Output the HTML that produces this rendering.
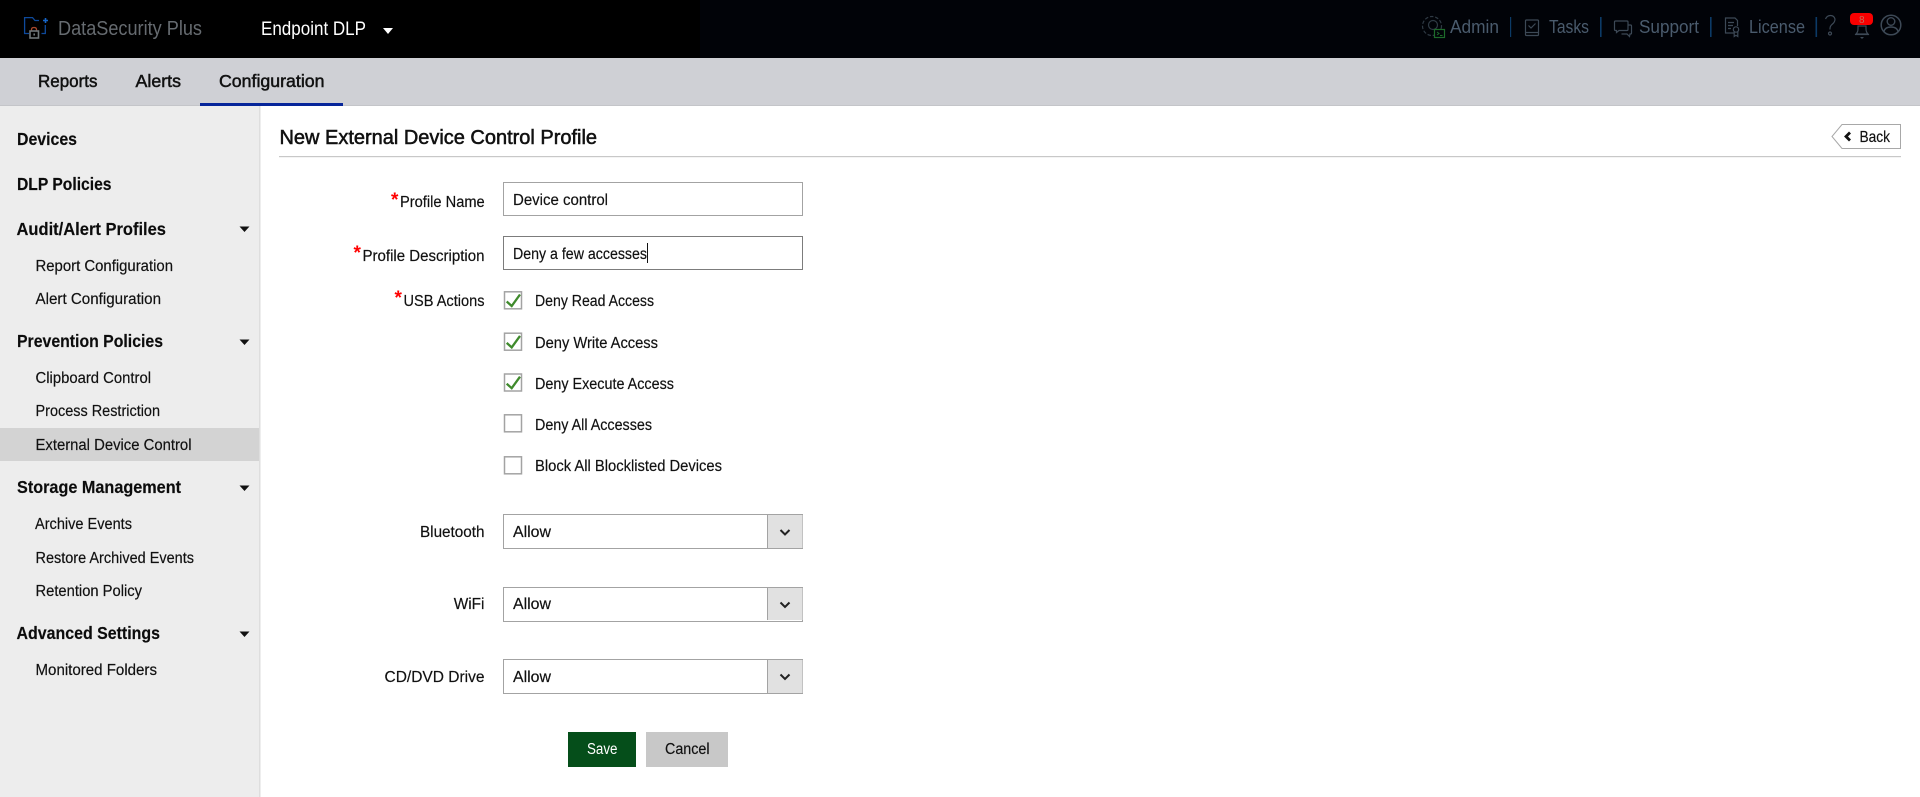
<!DOCTYPE html>
<html lang="en">
<head>
<meta charset="utf-8">
<title>New External Device Control Profile</title>
<style>
html,body{margin:0;padding:0;background:#fff;width:1920px;height:797px;overflow:hidden}
svg{display:block;position:absolute;left:0;top:0}
text{font-family:"Liberation Sans",Arial,sans-serif;fill:#111;font-size:15.5px;stroke:#111;stroke-width:.18}
.h{font-size:17.5px;font-weight:700;fill:#0c0c0c;stroke:#0c0c0c;stroke-width:.15}
.n{font-size:17.5px;stroke:#111;stroke-width:.5;fill:#111}
.t{font-size:18px;fill:#4a5b6d;stroke:none}
.ic{fill:none;stroke:#3d4956;stroke-width:1.2}
.s{font-size:19px;font-weight:700;fill:#f00;stroke:none}
</style>
</head>
<body>
<svg width="1920" height="797" viewBox="0 0 1920 797" xmlns="http://www.w3.org/2000/svg">
<!-- header -->
<rect x="0" y="0" width="1920" height="58" fill="#010308"/>
<rect x="0" y="0" width="700" height="58" fill="#000"/>
<rect x="0" y="58" width="1920" height="47" fill="#cfd0d5"/>
<rect x="0" y="105" width="1920" height="1" fill="#c4c5c9"/>
<rect x="200" y="103" width="143" height="3" fill="#06259a"/>

<!-- logo -->
<g fill="none" stroke="#0e4a9c" stroke-width="1.3">
<path d="M29 33.500H24.600V17.600H32.500L35 20.500H39"/>
<path d="M45.300 25V33.500H41.500"/>
</g>
<path d="M43 20.500H48M45.500 18V23" stroke="#1665c8" stroke-width="1.600" fill="none"/>
<path d="M31.500 31V29.500Q31.500 27.500 34 27.500Q36.500 27.500 36.500 29.500V31" fill="none" stroke="#a8482c" stroke-width="1.300"/>
<rect x="30" y="31" width="8.500" height="7" fill="none" stroke="#6e7679" stroke-width="1.600"/>
<rect x="33.400" y="33.500" width="1.600" height="2" fill="#6e7679"/>
<text x="58" y="35" textLength="144" lengthAdjust="spacingAndGlyphs" style="font-size:20px;fill:#666b70;stroke:none">DataSecurity Plus</text>
<text x="261" y="35" textLength="105" lengthAdjust="spacingAndGlyphs" style="font-size:19px;fill:#fff;stroke:none">Endpoint DLP</text>
<path d="M383 28H393L388 34Z" fill="#fff"/>

<!-- header right -->
<circle cx="1432" cy="26" r="9.500" fill="none" stroke="#2f3a44" stroke-width="1.200" stroke-dasharray="3.500 1.800"/>
<circle cx="1433" cy="25" r="4.500" fill="none" stroke="#2f3a44" stroke-width="1.200"/>
<rect x="1434.500" y="29.500" width="10" height="8" fill="#010308" stroke="#1d6b2a" stroke-width="1.200"/>
<path d="M1437 32l2 1.500-2 1.500M1440 35.500h2.500" fill="none" stroke="#1d6b2a" stroke-width="1"/>
<text class="t" x="1450" y="33" textLength="49" lengthAdjust="spacingAndGlyphs">Admin</text>
<rect x="1510" y="17" width="1.200" height="20" fill="#0c3a66"/>

<g class="ic">
<rect x="1525.500" y="20" width="13" height="15.500" rx="1"/>
<path d="M1525.500 32.500h13"/>
<path d="M1528.500 25.500l2.500 2.500 4.500-4.500"/>
</g>
<text class="t" x="1549" y="33" textLength="40" lengthAdjust="spacingAndGlyphs">Tasks</text>
<rect x="1600" y="17" width="1.600" height="20" fill="#0c3a66"/>

<g class="ic">
<path d="M1615.500 21h11.500a1 1 0 0 1 1 1v7.500a1 1 0 0 1-1 1h-8l-2.500 2v-2h-1a1 1 0 0 1-1-1V22a1 1 0 0 1 1-1z"/>
<path d="M1628 25h2.500a1 1 0 0 1 1 1v7a1 1 0 0 1-1 1h-.5l-.5 2.500-2.500-2.500h-5.500"/>
</g>
<text class="t" x="1639" y="33" textLength="60" lengthAdjust="spacingAndGlyphs">Support</text>
<rect x="1710" y="17" width="1.600" height="20" fill="#0c3a66"/>

<g class="ic">
<path d="M1734 33h-8.500V18h9.500l2.500 2.500V26"/>
<path d="M1728 22.500h6M1728 25.500h5M1728 28.500h3"/>
<circle cx="1736" cy="29.500" r="2.700"/>
<path d="M1734.200 32v4.500l1.800-1.200 1.800 1.200V32"/>
</g>
<text class="t" x="1749" y="33" textLength="56" lengthAdjust="spacingAndGlyphs">License</text>
<rect x="1815.500" y="17" width="1.600" height="20" fill="#0c3a66"/>

<path d="M1825.500 19q1.500-3.500 5-3.500t4.500 3.500q0 3-2.500 5t-2.500 4.500v1" class="ic"/>
<circle cx="1830" cy="33.500" r="1.500" class="ic"/>

<path d="M1856 34q2-2 2-5v-3h8v3q0 3 2 5z" class="ic"/>
<path d="M1855 34.500h14" class="ic"/>
<path d="M1860 37h4l-2 2z" fill="#3d4956"/>
<rect x="1850" y="13" width="23" height="12" rx="4" fill="#f90000"/>
<text x="1859" y="23" style="font-size:10px;fill:#c86a58;stroke:none">8</text>
<circle cx="1891" cy="25" r="9.800" class="ic" style="stroke-width:1.500"/>
<circle cx="1891" cy="21.500" r="3.800" class="ic" style="stroke-width:1.400"/>
<path d="M1884 31.500q1-4.500 7-4.500t7 4.500" class="ic" style="stroke-width:1.400"/>

<!-- top nav -->
<text class="n" x="38" y="87" textLength="59.500" lengthAdjust="spacingAndGlyphs">Reports</text>
<text class="n" x="135.500" y="87" textLength="45.500" lengthAdjust="spacingAndGlyphs">Alerts</text>
<text class="n" x="219" y="87" textLength="105.500" lengthAdjust="spacingAndGlyphs">Configuration</text>

<!-- sidebar -->
<rect x="0" y="106" width="259" height="691" fill="#ededed"/>
<rect x="259" y="106" width="1.500" height="691" fill="#dedede"/>
<rect x="0" y="428" width="259" height="33" fill="#d3d3d3"/>

<text class="h" x="17" y="145" textLength="60" lengthAdjust="spacingAndGlyphs">Devices</text>
<text class="h" x="17" y="190" textLength="94.500" lengthAdjust="spacingAndGlyphs">DLP Policies</text>
<text class="h" x="16.500" y="235" textLength="149.500" lengthAdjust="spacingAndGlyphs">Audit/Alert Profiles</text>
<text x="35.500" y="271" textLength="137.500" lengthAdjust="spacingAndGlyphs">Report Configuration</text>
<text x="35.500" y="304" textLength="125.500" lengthAdjust="spacingAndGlyphs">Alert Configuration</text>
<text class="h" x="17" y="347" textLength="146" lengthAdjust="spacingAndGlyphs">Prevention Policies</text>
<text x="35.500" y="383" textLength="115.500" lengthAdjust="spacingAndGlyphs">Clipboard Control</text>
<text x="35.500" y="416" textLength="124.500" lengthAdjust="spacingAndGlyphs">Process Restriction</text>
<text x="35.500" y="450" textLength="156" lengthAdjust="spacingAndGlyphs">External Device Control</text>
<text class="h" x="17" y="493" textLength="164" lengthAdjust="spacingAndGlyphs">Storage Management</text>
<text x="35" y="529" textLength="97" lengthAdjust="spacingAndGlyphs">Archive Events</text>
<text x="35.500" y="563" textLength="158.500" lengthAdjust="spacingAndGlyphs">Restore Archived Events</text>
<text x="35.500" y="596" textLength="106.500" lengthAdjust="spacingAndGlyphs">Retention Policy</text>
<text class="h" x="16.500" y="639" textLength="143.500" lengthAdjust="spacingAndGlyphs">Advanced Settings</text>
<text x="35.500" y="675" textLength="121.500" lengthAdjust="spacingAndGlyphs">Monitored Folders</text>

<g fill="#111">
<path d="M239.500 226.500H249.500L244.500 232Z"/>
<path d="M239.500 339.500H249.500L244.500 345Z"/>
<path d="M239.500 485.500H249.500L244.500 491Z"/>
<path d="M239.500 631.500H249.500L244.500 637Z"/>
</g>

<!-- title -->
<text x="279.500" y="144" textLength="317.500" lengthAdjust="spacingAndGlyphs" style="font-size:20px;stroke:#111;stroke-width:.55">New External Device Control Profile</text>
<rect x="279" y="156" width="1622" height="1.200" fill="#c8c8c8"/>

<!-- back -->
<path d="M1842 124.500H1900.500V148.500H1842L1832 136.500Z" fill="#fff" stroke="#a8a8a8" stroke-width="1"/>
<path d="M1850 132.500l-4 4 4 4" fill="none" stroke="#111" stroke-width="2.800"/>
<text x="1859.500" y="142" textLength="30.500" lengthAdjust="spacingAndGlyphs" style="font-size:16px">Back</text>

<!-- form labels -->
<text class="s" x="391" y="206">*</text>
<text class="s" x="353.500" y="259">*</text>
<text class="s" x="394.500" y="304">*</text>
<text x="400" y="207" textLength="84.700" lengthAdjust="spacingAndGlyphs">Profile Name</text>
<text x="362.500" y="261" textLength="122" lengthAdjust="spacingAndGlyphs">Profile Description</text>
<text x="403.500" y="306" textLength="81" lengthAdjust="spacingAndGlyphs">USB Actions</text>
<text x="420" y="537" textLength="64.500" lengthAdjust="spacingAndGlyphs">Bluetooth</text>
<text x="453.700" y="609" textLength="30.800" lengthAdjust="spacingAndGlyphs">WiFi</text>
<text x="384.500" y="682" textLength="100" lengthAdjust="spacingAndGlyphs">CD/DVD Drive</text>

<!-- inputs -->
<rect x="503.500" y="182.500" width="299" height="33" fill="#fff" stroke="#a3a3a3"/>
<text x="513" y="205" textLength="95" lengthAdjust="spacingAndGlyphs">Device control</text>
<rect x="503.500" y="236.500" width="299" height="33" fill="#fff" stroke="#7c7c7c"/>
<text x="513" y="259" textLength="134" lengthAdjust="spacingAndGlyphs">Deny a few accesses</text>
<rect x="647" y="243" width="1" height="20" fill="#111"/>

<!-- checkboxes -->
<g fill="#fff" stroke="#a3a3a3" stroke-width="1.500">
<rect x="504.500" y="291.800" width="17" height="17"/>
<rect x="504.500" y="333.200" width="17" height="17"/>
<rect x="504.500" y="374" width="17" height="17"/>
<rect x="504.500" y="414.800" width="17" height="17"/>
<rect x="504.500" y="456.800" width="17" height="17"/>
</g>
<g fill="none" stroke="#3f8a2c" stroke-width="2.300">
<path d="M506.700 301.500l5 4.500 8.300-11.500"/>
<path d="M506.700 342.900l5 4.500 8.300-11.500"/>
<path d="M506.700 383.700l5 4.500 8.300-11.500"/>
</g>
<text x="535" y="306" textLength="119" lengthAdjust="spacingAndGlyphs">Deny Read Access</text>
<text x="535" y="348" textLength="123" lengthAdjust="spacingAndGlyphs">Deny Write Access</text>
<text x="535" y="389" textLength="139" lengthAdjust="spacingAndGlyphs">Deny Execute Access</text>
<text x="535" y="430" textLength="117" lengthAdjust="spacingAndGlyphs">Deny All Accesses</text>
<text x="535" y="471" textLength="187" lengthAdjust="spacingAndGlyphs">Block All Blocklisted Devices</text>

<!-- selects -->
<g>
<rect x="503.500" y="514.500" width="299" height="34" fill="#fff" stroke="#a3a3a3"/>
<rect x="767.500" y="515" width="35" height="33" fill="#e1e1e1"/>
<path d="M767.500 515V548" stroke="#a3a3a3"/>
<path d="M780.500 530l4.500 4.500 4.500-4.500" fill="none" stroke="#222" stroke-width="2"/>
<text x="513" y="537" textLength="38" lengthAdjust="spacingAndGlyphs">Allow</text>
</g>
<g>
<rect x="503.500" y="587.500" width="299" height="34" fill="#fff" stroke="#a3a3a3"/>
<rect x="767.500" y="588" width="35" height="32" fill="#e1e1e1"/>
<path d="M767.500 588V620" stroke="#a3a3a3"/>
<path d="M780.500 602.500l4.500 4.500 4.500-4.500" fill="none" stroke="#222" stroke-width="2"/>
<text x="513" y="609" textLength="38" lengthAdjust="spacingAndGlyphs">Allow</text>
</g>
<g>
<rect x="503.500" y="659.500" width="299" height="34" fill="#fff" stroke="#a3a3a3"/>
<rect x="767.500" y="660" width="35" height="33" fill="#e1e1e1"/>
<path d="M767.500 660V693" stroke="#a3a3a3"/>
<path d="M780.500 674.500l4.500 4.500 4.500-4.500" fill="none" stroke="#222" stroke-width="2"/>
<text x="513" y="682" textLength="38" lengthAdjust="spacingAndGlyphs">Allow</text>
</g>

<!-- buttons -->
<rect x="568" y="732" width="68" height="35" fill="#054e1a"/>
<text x="587" y="754" textLength="30.500" lengthAdjust="spacingAndGlyphs" style="fill:#fff;stroke:none">Save</text>
<rect x="646" y="732" width="82" height="35" fill="#c8c8c8"/>
<text x="665" y="754" textLength="44.500" lengthAdjust="spacingAndGlyphs">Cancel</text>
</svg>
</body>
</html>
